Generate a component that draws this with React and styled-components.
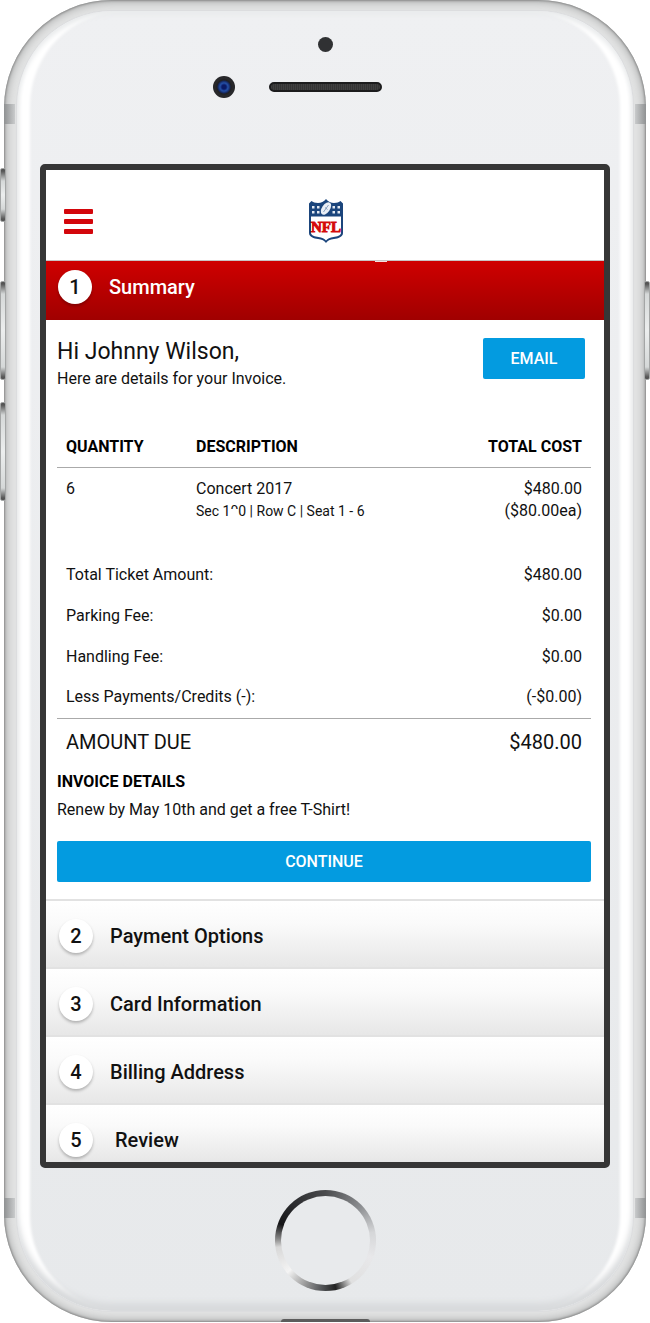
import { styled, createGlobalStyle } from 'styled-components'

const sections = [
  { number: 2, title: "Payment Options" },
  { number: 3, title: "Card Information" },
  { number: 4, title: "Billing Address" },
  { number: 5, title: "\u00a0Review" },
]

const fees = [
  { label: "Total Ticket Amount:", amount: "$480.00" },
  { label: "Parking Fee:", amount: "$0.00" },
  { label: "Handling Fee:", amount: "$0.00" },
  { label: "Less Payments/Credits (-):", amount: "(-$0.00)" },
]

const Logo = () => (
  <svg width="36" height="44" viewBox="0 0 36 44" role="img" aria-label="NFL">
    <path d="M18 0 C16 2.5 13 4 10 4 C7 4 5 3 3.5 2 L1 4.5 V34 C1 38 6 39.5 10 40 C14 40.5 16.5 41.5 18 44 C19.5 41.5 22 40.5 26 40 C30 39.5 35 38 35 34 V4.5 L32.5 2 C31 3 29 4 26 4 C23 4 20 2.5 18 0 Z" fill="#1b457c" />
    <path d="M3 17.500 H33 V34 C33 36.5 29 37.5 25.5 38 C22 38.5 19.5 39.5 18 41.5 C16.5 39.5 14 38.5 10.5 38 C7 37.5 3 36.5 3 34 Z" fill="#fff" />
    <g fill="#e4eaf2">
      <rect x="4" y="7" width="2.5" height="2.5" />
      <rect x="9" y="7" width="2.5" height="2.5" />
      <rect x="4" y="12" width="2.5" height="2.5" />
      <rect x="9" y="12" width="2.5" height="2.5" />
      <rect x="24.5" y="7" width="2.5" height="2.5" />
      <rect x="29.5" y="7" width="2.5" height="2.5" />
      <rect x="24.5" y="12" width="2.5" height="2.5" />
      <rect x="29.5" y="12" width="2.5" height="2.5" />
    </g>
    <ellipse cx="18" cy="9.5" rx="7" ry="4" transform="rotate(-55 18 9.5)" fill="#e9eef5" />
    <path d="M15.500 13 L20.500 6 M17 8.500 L19.500 10.500" stroke="#6f8bb0" strokeWidth="0.8" />
    <text x="18" y="33" textAnchor="middle" fill="#d50a0a" stroke="#d50a0a" strokeWidth="0.9" fontFamily="'Liberation Serif', serif" fontWeight="700" fontSize="15">NFL</text>
  </svg>
)

const App = () => {
  return (
    <Page>
      <GlobalStyle />
      <Phone>
        <SideButton $side="left" $top={168} $height={54} />
        <SideButton $side="left" $top={281} $height={99} />
        <SideButton $side="left" $top={402} $height={99} />
        <SideButton $side="right" $top={281} $height={99} />
        <Antenna $side="left" $edge="top" />
        <Antenna $side="right" $edge="top" />
        <Antenna $side="left" $edge="bottom" />
        <Antenna $side="right" $edge="bottom" />
        <Port />
        <Face>
          <Forehead>
            <Sensor />
            <SpeakerRow>
              <Camera />
              <Speaker />
            </SpeakerRow>
          </Forehead>

          <Screen>
            <Header>
              <MenuButton aria-label="Menu">
                <Bar />
                <Bar />
                <Bar />
              </MenuButton>
              <Logo />
              <Glint />
            </Header>

            <ActiveStep aria-expanded="true">
              <StepNumber>1</StepNumber>
              Summary
            </ActiveStep>

            <Summary>
              <Intro>
                <div>
                  <Greeting>Hi Johnny Wilson,</Greeting>
                  <Text>Here are details for your Invoice.</Text>
                </div>
                <EmailButton>EMAIL</EmailButton>
              </Intro>

              <Items>
                <thead>
                  <tr>
                    <th>QUANTITY</th>
                    <th>DESCRIPTION</th>
                    <th>TOTAL COST</th>
                  </tr>
                </thead>
                <tbody>
                  <tr>
                    <td>6</td>
                    <td>
                      Concert 2017
                      <Seats>Sec 1<WornDigit>0</WornDigit>0 | Row C | Seat 1 - 6</Seats>
                    </td>
                    <td>
                      $480.00
                      <Each>($80.00ea)</Each>
                    </td>
                  </tr>
                </tbody>
              </Items>

              <Totals>
                <tbody>
                  {fees.map((fee) => (
                    <tr key={fee.label}>
                      <th>{fee.label}</th>
                      <td>{fee.amount}</td>
                    </tr>
                  ))}
                </tbody>
                <tfoot>
                  <tr>
                    <th>AMOUNT DUE</th>
                    <td>$480.00</td>
                  </tr>
                </tfoot>
              </Totals>

              <DetailsTitle>INVOICE DETAILS</DetailsTitle>
              <Text>Renew by May 10th and get a free T-Shirt!</Text>
              <ContinueButton>CONTINUE</ContinueButton>
            </Summary>

            <Steps>
              {sections.map((section) => (
                <Step key={section.number} aria-expanded="false">
                  <StepNumber>{section.number}</StepNumber>
                  {section.title}
                </Step>
              ))}
            </Steps>
          </Screen>

          <Chin>
            <HomeButton aria-label="Home" />
          </Chin>
        </Face>
      </Phone>
    </Page>
  )
}

export default App

const GlobalStyle = createGlobalStyle`
  * {
    box-sizing: border-box;
  }
  body {
    margin: 0;
    background: #fff;
    color: #111;
    font-family: Roboto, 'Liberation Sans', sans-serif;
    font-size: 16px;
    line-height: 20px;
  }
  button {
    font-family: inherit;
    border: 0;
    cursor: pointer;
  }
`
const Page = styled.main`
  padding: 0 4px 1px;
`
const Phone = styled.div`
  position: relative;
  padding: 10px 12px;
  border-radius: 108px;
  background: #e2e3e3;
  box-shadow: inset 0 0 2px 1px #8d8e8e, inset 0 0 8px 2px #a9aaaa;
`
const Face = styled.div`
  padding: 0 23px;
  border: 1px solid #dcdddf;
  border-radius: 96px;
  background: linear-gradient(#eff0f2, #e7e9eb);
  box-shadow: inset 0 4px 5px #e9ebec, inset 0 -8px 6px #d8dadc, inset 13px 0 3px #fff, inset -13px 0 3px #fff;
`
const SideButton = styled.div`
  position: absolute;
  top: ${(props) => props.$top}px;
  ${(props) => props.$side}: -4px;
  width: 6px;
  height: ${(props) => props.$height}px;
  border: 1px solid #a4a6a6;
  border-radius: 2px;
  background: linear-gradient(#555 2px, #d5d8d8 12px, #eceeee 50%, #d5d8d8 calc(100% - 12px), #555 calc(100% - 2px));
`
const Antenna = styled.div`
  position: absolute;
  ${(props) => props.$edge}: 104px;
  ${(props) => props.$side}: 0;
  width: 11px;
  height: 20px;
  background: linear-gradient(to ${(props) => props.$side}, #c9cbcc, #8f9192);
`
const Port = styled.div`
  position: absolute;
  bottom: 0;
  left: calc(50% - 44px);
  width: 89px;
  height: 3px;
  border-radius: 4px 4px 0 0;
  background: #5c5c5c;
`
const Forehead = styled.div`
  display: flex;
  flex-direction: column;
  align-items: center;
  gap: 24px;
  height: 153px;
  padding-top: 26px;
`
const Sensor = styled.div`
  width: 15px;
  height: 15px;
  border-radius: 50%;
  background: #303133;
`
const SpeakerRow = styled.div`
  display: grid;
  grid-template-columns: 1fr 113px 1fr;
  align-items: center;
  width: 100%;
`
const Camera = styled.div`
  justify-self: end;
  width: 22px;
  height: 22px;
  margin-right: 34px;
  border-radius: 50%;
  background: radial-gradient(circle, #0a1a66 2px, #2450a8 4px, #16285f 6px, #202023 7px, #29292c 9px, #1a1a1b);
`
const Speaker = styled.div`
  height: 10px;
  border: 2px solid #1c1c1d;
  border-radius: 5px;
  background: repeating-linear-gradient(90deg, #404040 0 1px, #333 1px 2px);
`
const Screen = styled.div`
  border: 6px solid #363636;
  border-radius: 5px;
  background: #fff;
`
const Header = styled.header`
  position: relative;
  display: grid;
  grid-template-columns: 1fr auto 1fr;
  align-items: center;
  height: 91px;
  padding: 12px 17px 0 18px;
  border-bottom: 1px solid #c9c4c4;
`
const MenuButton = styled.button`
  display: flex;
  flex-direction: column;
  gap: 5px;
  width: 29px;
  padding: 0;
  background: none;
`
const Bar = styled.span`
  height: 5px;
  border-radius: 1px;
  background: #d3060b;
`
// light reflection on the edge of the header
const Glint = styled.span`
  position: absolute;
  bottom: -2px;
  left: 59%;
  width: 12px;
  height: 1px;
  background: #f7dede;
`
const Step = styled.button`
  display: flex;
  align-items: center;
  gap: 17px;
  width: 100%;
  height: 68px;
  padding: 4px 13px 0;
  border-top: 2px solid #e2e2e2;
  background: linear-gradient(#fff, #fafafa 35%, #e7e7e7);
  color: #111;
  font-size: 20px;
  font-weight: 500;
  text-align: left;

  &:last-child {
    height: 59px;
    padding-top: 12px;
  }
`
const ActiveStep = styled(Step)`
  height: 59px;
  padding: 0 12px 8px;
  border-top: 0;
  background: linear-gradient(#cf0000, #a00000);
  color: #fff;
`
const StepNumber = styled.span`
  display: flex;
  align-items: center;
  justify-content: center;
  width: 34px;
  height: 34px;
  border-radius: 50%;
  background: #fff;
  box-shadow: 0 2px 3px rgba(0, 0, 0, 0.25);
  color: #111;
`
const Steps = styled.div`
  margin-top: 17px;
`
const Summary = styled.section`
  padding: 18px 13px 0 11px;
`
const Intro = styled.div`
  display: flex;
  justify-content: space-between;
  align-items: flex-start;
  padding-right: 6px;
`
const Greeting = styled.h1`
  margin: 0;
  font-size: 23px;
  font-weight: 400;
  line-height: 28px;
`
const Text = styled.p`
  margin: 3px 0 0;
`
const BlueButton = styled.button`
  height: 41px;
  border-radius: 2px;
  background: #039be0;
  color: #fff;
  font-size: 16px;
  font-weight: 500;
`
const EmailButton = styled(BlueButton)`
  width: 102px;
`
const ContinueButton = styled(BlueButton)`
  width: 100%;
  margin-top: 21px;
`
const Items = styled.table`
  width: 100%;
  margin-top: 38px;
  border-collapse: collapse;

  th, td {
    padding: 10px 9px;
    text-align: left;
    vertical-align: top;
  }
  td {
    padding-top: 11px;
  }
  th {
    border-bottom: 1px solid #aaa;
    color: #000;
  }
  th:first-child {
    width: 130px;
  }
  th:last-child, td:last-child {
    text-align: right;
  }
`
const Seats = styled.div`
  margin-top: 2px;
  font-size: 14px;
`
const WornDigit = styled.span`
  position: relative;

  &::after {
    content: '';
    position: absolute;
    right: 0;
    bottom: 0;
    left: 0;
    height: 10px;
    background: #fff;
  }
`
const Each = styled.div`
  margin-top: 2px;
`
const Totals = styled.table`
  width: 100%;
  margin-top: 23px;
  border-collapse: collapse;

  th, td {
    height: 41px;
    padding: 0 9px;
    font-weight: 400;
    text-align: left;
  }
  td {
    text-align: right;
  }
  tfoot th, tfoot td {
    height: 48px;
    border-top: 1px solid #aaa;
    font-size: 20px;
  }
`
const DetailsTitle = styled.h2`
  margin: 6px 0 8px;
  color: #000;
  font-size: 16px;
  line-height: 20px;
`
const Chin = styled.div`
  display: flex;
  justify-content: center;
  padding: 22px 0 20px;
`
const HomeButton = styled.button`
  width: 101px;
  height: 101px;
  border: 6px solid transparent;
  border-radius: 50%;
  background:
    linear-gradient(#e8eaec, #e8eaec) padding-box,
    conic-gradient(#4a4b4d, #8a8c8f 45deg, #d5d6d8 80deg, #e8e8ea 110deg, #e0e0e0 148deg, #222 168deg, #55575a 185deg, #999 205deg, #f4f4f4 230deg, #d8d8d8 262deg, #888 272deg, #151517 290deg, #2c2d30 320deg, #4a4b4d) border-box;
`
